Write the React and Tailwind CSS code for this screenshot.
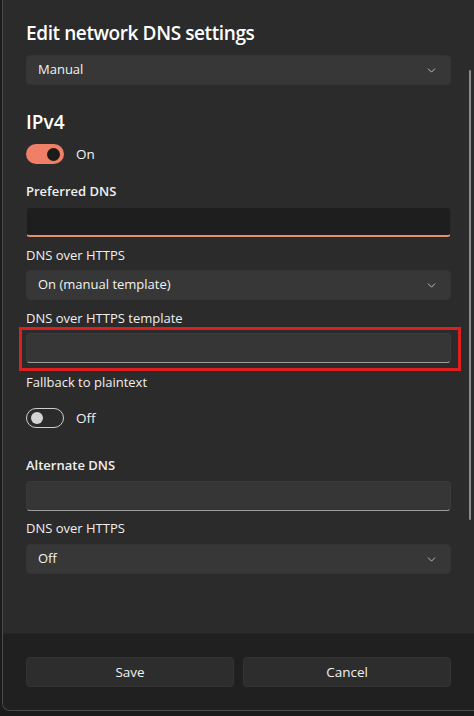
import { ChevronDown } from 'lucide-react';

const font = { fontFamily: '"Open Sans", "Noto Sans", sans-serif' };

function Select({ value }) {
  return (
    <div className="flex h-[30px] w-[425px] items-center rounded-[4px] border border-[#343434] bg-[#373737] pl-[11px] pr-[12px]">
      <span className="shrink-0 text-[13px] text-[#f2f2f2]">{value}</span>
      <div className="flex-1" />
      <ChevronDown size={13} strokeWidth={1.6} className="shrink-0 text-[#cfcfcf]" />
    </div>
  );
}

function Input({ focused }) {
  return focused ? (
    <div className="h-[30px] w-[425px] rounded-[4px] border border-[#2a2a2a] border-b-2 border-b-[#e4906f] bg-[#1e1e1e]" />
  ) : (
    <div className="h-[30px] w-[425px] rounded-[4px] border border-[#3a3a3a] border-b-[#9c9c9c] bg-[#363636]" />
  );
}

function Label({ children, bold, className = '' }) {
  return (
    <div
      className={`h-[18px] text-[13px] leading-[18px] text-[#f0f0f0] ${bold ? 'font-semibold' : ''} ${className}`}
    >
      {children}
    </div>
  );
}

function Toggle({ on, className = '' }) {
  return (
    <div className={`flex h-[20px] items-center gap-[12px] ${className}`}>
      {on ? (
        <div className="flex h-[20px] w-[38px] items-center justify-end rounded-full bg-[#ef7f67] pr-[4px]">
          <div className="h-[13px] w-[13px] rounded-full bg-[#1b1b1b]" />
        </div>
      ) : (
        <div className="flex h-[20px] w-[38px] items-center rounded-full border border-[#cfcfcf] pl-[4px]">
          <div className="h-[12px] w-[12px] rounded-full bg-[#d4d4d4]" />
        </div>
      )}
      <span className="text-[13.5px] text-[#f2f2f2]">{on ? 'On' : 'Off'}</span>
    </div>
  );
}

export default function App() {
  return (
    <div className="h-[716px] w-[474px] overflow-hidden bg-[#1b1b1b]" style={font}>
      <div className="relative ml-[2px] h-[711px] w-[490px] overflow-hidden rounded-bl-[8px] border-b border-l border-[#4a4a4a] bg-[#2b2b2b]">
        {/* scrollbar */}
        <div className="absolute left-[466px] top-[70px] h-[450px] w-[2px] rounded-full bg-[#8c8c8c]" />

        <div className="h-[633px] pl-[23px] pt-[20px]">
          <div className="h-[26px] text-[19px] font-semibold leading-[26px] tracking-[-0.4px] text-white">
            Edit network DNS settings
          </div>
          <div className="mt-[9px]">
            <Select value="Manual" />
          </div>
          <div className="mt-[24px] h-[26px] text-[19px] font-semibold leading-[26px] text-white">IPv4</div>
          <Toggle on className="mt-[9px]" />

          <Label bold className="mt-[18px]">Preferred DNS</Label>
          <div className="mt-[7px]">
            <Input focused />
          </div>
          <Label className="mt-[9px]">DNS over HTTPS</Label>
          <div className="mt-[6px]">
            <Select value="On (manual template)" />
          </div>
          <Label className="mt-[9px]">DNS over HTTPS template</Label>
          <div className="relative mt-[6px] w-[425px]">
            <Input />
            <div className="absolute -bottom-[8px] -left-[7px] -right-[10px] -top-[6px] border-[3px] border-[#dc1f1f]" />
          </div>
          <Label className="mt-[10px]">Fallback to plaintext</Label>
          <Toggle className="mt-[17px]" />

          <Label bold className="mt-[28px]">Alternate DNS</Label>
          <div className="mt-[7px]">
            <Input />
          </div>
          <Label className="mt-[8px]">DNS over HTTPS</Label>
          <div className="mt-[7px]">
            <Select value="Off" />
          </div>
        </div>

        <div className="h-[77px] border-t border-[#262626] bg-[#202020] pl-[23px] pt-[23px]">
          <div className="flex w-[425px] gap-[9px]">
            <button className="h-[30px] flex-1 rounded-[4px] border border-[#343434] bg-[#2d2d2d] text-[13.5px] text-[#f2f2f2]">
              Save
            </button>
            <button className="h-[30px] flex-1 rounded-[4px] border border-[#343434] bg-[#2d2d2d] text-[13.5px] text-[#f2f2f2]">
              Cancel
            </button>
          </div>
        </div>
      </div>
    </div>
  );
}
